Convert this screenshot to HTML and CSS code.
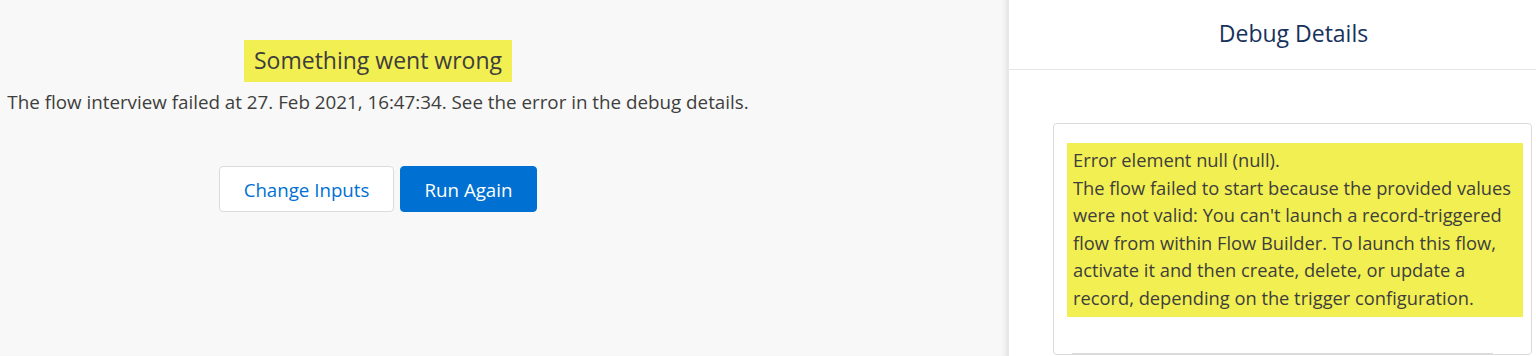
FILE: index.html
```html
<!DOCTYPE html>
<html>
<head>
  <title>Flow Debug</title>
  <link rel="stylesheet" href="styles.css">
</head>
<body>
  <div class="layout">
    <!-- Run result -->
    <div class="run-panel">
      <div class="run-result">
        <h2 class="mark run-title">Something went wrong</h2>
        <p class="run-message">The flow interview failed at 27. Feb 2021, 16:47:34. See the error in the debug details.</p>
        <div class="run-actions">
          <button class="btn btn-neutral">Change Inputs</button>
          <button class="btn btn-brand">Run Again</button>
        </div>
      </div>
    </div>

    <!-- Debug panel -->
    <div class="debug-panel">
      <div class="debug-header">Debug Details</div>
      <div class="debug-body">
        <div class="debug-card">
          <div class="mark debug-error">
            Error element null (null).<br>
            The flow failed to start because the provided values were not valid: You can't launch a record-triggered flow from within Flow Builder. To launch this flow, activate it and then create, delete, or update a record, depending on the trigger configuration.
          </div>
          <div class="debug-rule"></div>
        </div>
      </div>
    </div>
  </div>
</body>
</html>
```

FILE: styles.css
```css
body {
  margin: 0;
  padding: 0;
  background: #fff;
  color: #3e3e3c;
  font-family: 'Open Sans', 'Noto Sans', sans-serif;
}

.layout {
  display: flex;
  height: 356px;
  overflow: hidden;
}

.mark {
  background: #f2ef52;
}

/* Run result */
.run-panel {
  width: 1008px;
  flex-shrink: 0;
  background: #f8f8f8;
  box-shadow: inset -6px 0 6px -5px rgba(0, 0, 0, 0.12);
}

.run-result {
  width: 756px;
  padding-top: 40px;
  display: flex;
  flex-direction: column;
  align-items: center;
}

.run-title {
  margin: 0;
  padding: 0 10px;
  height: 42px;
  line-height: 40px;
  font-size: 23px;
  font-weight: normal;
  color: #3e3e3c;
}

.run-message {
  margin: 8px 0 0 0;
  font-size: 18.8px;
  line-height: 24px;
  white-space: nowrap;
  color: #3e3e3c;
}

.run-actions {
  display: flex;
  gap: 6px;
  margin-top: 52px;
}

.btn {
  height: 46px;
  padding: 0;
  border-radius: 4px;
  font-family: inherit;
  font-size: 18.7px;
  cursor: pointer;
}

.btn-neutral {
  width: 175px;
  background: #fff;
  border: 1px solid #dddbda;
  color: #0070d2;
}

.btn-brand {
  width: 137px;
  background: #0070d2;
  border: 1px solid #0070d2;
  color: #fff;
}

/* Debug panel */
.debug-panel {
  flex: 1;
  background: #fff;
  border-left: 1px solid #e8e8e8;
}

.debug-header {
  height: 69px;
  line-height: 66px;
  padding-left: 42px;
  text-align: center;
  font-size: 23px;
  color: #16325c;
  border-bottom: 1px solid #e5e5e5;
}

.debug-body {
  padding: 53px 4px 0 44px;
}

.debug-card {
  border: 1px solid #dddbda;
  border-radius: 4px;
  padding: 19px 8px 0 13px;
}

.debug-error {
  padding: 3px 6px 5px 6px;
  font-size: 18.3px;
  line-height: 27.6px;
  color: #3e3e3c;
}

.debug-rule {
  margin: 36px 30px 0 5px;
  border-top: 1px solid #dddbda;
}
```
